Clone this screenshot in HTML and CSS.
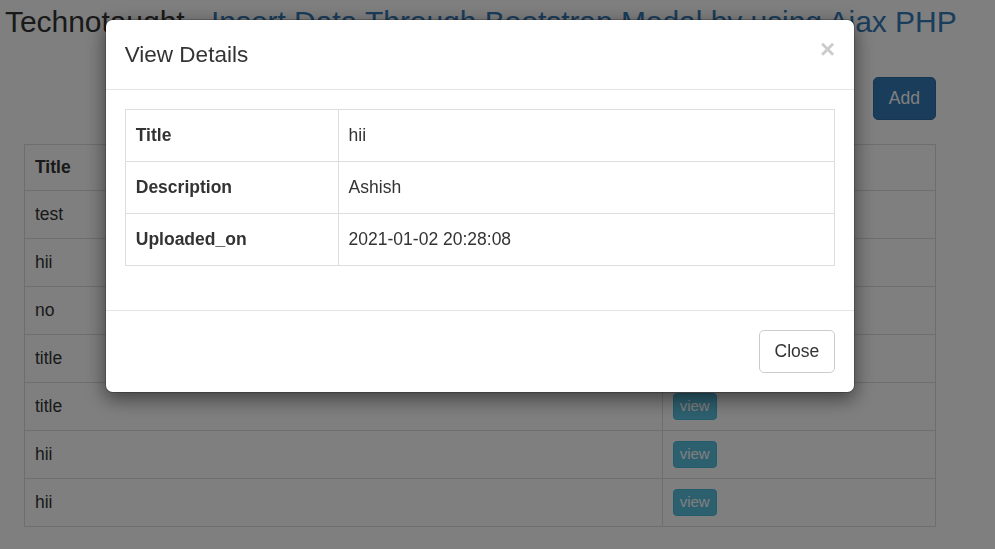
FILE: index.html
```html
<!DOCTYPE html>
<html lang="en">
<head>
<meta charset="utf-8">
<title>Technotaught - Insert Data Through Bootstrap Modal by using Ajax PHP</title>
<link rel="stylesheet" href="styles.css">
</head>
<body>
<div class="page">
  <h3 class="page-title">Technotaught - <a href="#" class="title-link">Insert Data Through Bootstrap Modal by using Ajax PHP</a></h3>
  <div class="toolbar">
    <button class="btn btn-primary">Add</button>
  </div>
  <table class="grid">
    <thead>
      <tr><th class="col-title">Title</th><th>Action</th></tr>
    </thead>
    <tbody>
      <tr><td>test</td><td><button class="btn-view">view</button></td></tr>
      <tr><td>hii</td><td><button class="btn-view">view</button></td></tr>
      <tr><td>no</td><td><button class="btn-view">view</button></td></tr>
      <tr><td>title</td><td><button class="btn-view">view</button></td></tr>
      <tr><td>title</td><td><button class="btn-view">view</button></td></tr>
      <tr><td>hii</td><td><button class="btn-view">view</button></td></tr>
      <tr><td>hii</td><td><button class="btn-view">view</button></td></tr>
    </tbody>
  </table>
</div>

<div class="backdrop"></div>

<div class="modal">
  <div class="modal-header">
    <h4 class="modal-title">View Details</h4>
    <button class="close" aria-label="Close">&times;</button>
  </div>
  <div class="modal-body">
    <table class="details">
      <tr><th>Title</th><td>hii</td></tr>
      <tr><th>Description</th><td>Ashish</td></tr>
      <tr><th>Uploaded_on</th><td>2021-01-02 20:28:08</td></tr>
    </table>
  </div>
  <div class="modal-footer">
    <button class="btn btn-default">Close</button>
  </div>
</div>
</body>
</html>
```

FILE: styles.css
```css
html, body {
  margin: 0;
  padding: 0;
}
body {
  background: #fff;
  font-family: "Liberation Sans", Arial, Helvetica, sans-serif;
  font-size: 17.5px;
  line-height: 1.42857;
  color: #333;
  overflow: hidden;
  height: 549px;
}

.page {
  display: flex;
  flex-direction: column;
}

.page-title {
  margin: 5px 0 0 5px;
  font-size: 30px;
  font-weight: 400;
  line-height: 1.1;
  color: #333;
  white-space: nowrap;
  letter-spacing: -0.05px;
}
.title-link {
  color: #337ab7;
  text-decoration: none;
}

.toolbar {
  display: flex;
  justify-content: flex-end;
  width: 936px;
  margin-top: 39px;
}

.btn {
  font-family: inherit;
  font-size: 17.5px;
  line-height: 25px;
  padding: 8px 15px 7.5px;
  border-radius: 5px;
  border: 1px solid transparent;
  cursor: pointer;
}
.btn-primary {
  background: #337ab7;
  border-color: #2e6da4;
  color: #fff;
}
.btn-default {
  background: #fff;
  border-color: #ccc;
  color: #333;
}

.grid {
  margin: 24px 0 0 24px;
  width: 912px;
  border-collapse: collapse;
  border: 1px solid #ddd;
}
.grid th,
.grid td {
  border: 1px solid #ddd;
  text-align: left;
  vertical-align: middle;
  padding: 10px;
}
.grid th {
  font-weight: 700;
  line-height: 25px;
}
.grid td {
  line-height: 27px;
}
.grid .col-title {
  width: 70%;
}

.btn-view {
  display: block;
  box-sizing: border-box;
  height: 27px;
  font-family: inherit;
  font-size: 15px;
  line-height: 22.5px;
  padding: 1px 6px;
  border-radius: 3.75px;
  background: #5bc0de;
  border: 1px solid #46b8da;
  color: #fff;
}

.backdrop {
  position: fixed;
  inset: 0;
  background: rgba(0, 0, 0, 0.5);
}

.modal {
  position: fixed;
  left: 105px;
  top: 19px;
  width: 750px;
  box-sizing: border-box;
  background: #fff;
  border: 1px solid rgba(0, 0, 0, 0.2);
  border-radius: 7.5px;
  box-shadow: 0 6px 19px rgba(0, 0, 0, 0.5);
  background-clip: padding-box;
}

.modal-header {
  display: flex;
  align-items: flex-start;
  justify-content: space-between;
  padding: 18.5px 18.75px;
  border-bottom: 1px solid #e5e5e5;
}
.modal-title {
  margin: 0;
  font-size: 22.5px;
  font-weight: 400;
  line-height: 32px;
  color: #333;
}
.close {
  background: none;
  border: 0;
  padding: 0;
  margin-top: -3px;
  font-family: inherit;
  font-size: 26px;
  font-weight: 700;
  line-height: 1;
  color: #000;
  opacity: 0.2;
  cursor: pointer;
}

.modal-body {
  padding: 18.75px;
}
.details {
  width: 100%;
  border-collapse: collapse;
  margin-bottom: 25px;
  border: 1px solid #ddd;
}
.details th,
.details td {
  border: 1px solid #ddd;
  padding: 13px 10px;
  line-height: 25px;
  text-align: left;
  vertical-align: top;
}
.details th {
  width: 30%;
  font-weight: 700;
}

.modal-footer {
  display: flex;
  justify-content: flex-end;
  padding: 19.5px 18.75px 19.5px;
  border-top: 1px solid #e5e5e5;
}
```
